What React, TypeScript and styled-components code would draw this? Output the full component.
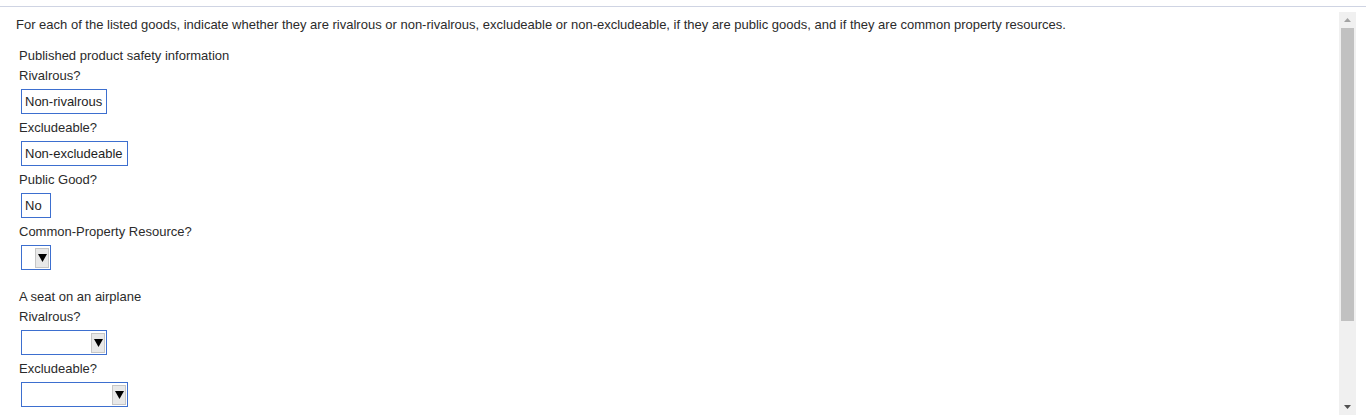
import React from 'react';
import styled, { createGlobalStyle } from 'styled-components';

const GlobalStyle = createGlobalStyle`
  html, body {
    margin: 0;
    padding: 0;
    background: #ffffff;
  }
  body {
    font-family: "Liberation Sans", Arial, sans-serif;
    font-size: 13px;
    color: #2b2b2b;
  }
`;

const Frame = styled.div`
  height: 415px;
  padding-top: 6px;
  box-sizing: border-box;
  display: flex;
  flex-direction: column;
  overflow: hidden;
`;

const Panel = styled.div`
  flex: 1;
  min-height: 0;
  display: flex;
  border-top: 1px solid #cfd4e3;
`;

const Content = styled.div`
  flex: 1;
  padding: 8px 0 0 16px;
  overflow: hidden;
`;

const Line = styled.div`
  line-height: 20px;
  white-space: nowrap;
`;

const Group = styled.div`
  display: flex;
  flex-direction: column;
  align-items: flex-start;
  margin: 11px 0 13px 3px;
  & + & {
    margin-top: 0;
  }
`;

const Field = styled.div<{ $width: number }>`
  display: flex;
  align-items: center;
  width: ${(p) => p.$width}px;
  height: 25px;
  margin: 3px 0 4px 2px;
  padding: 0 0 0 3px;
  box-sizing: border-box;
  border: 1px solid #3d6fcf;
  color: #1e1e1e;
  white-space: nowrap;
`;

const SelectField = styled(Field)`
  justify-content: flex-end;
  align-items: flex-end;
  padding: 0 1px 1px 0;
`;

const ArrowButton = styled.div`
  width: 14px;
  height: 20px;
  box-sizing: border-box;
  display: flex;
  align-items: center;
  justify-content: center;
  background: #e8e8e8;
  border: 1px solid #c6c6c6;
`;

const Scrollbar = styled.div`
  width: 17px;
  margin: 5px 10px 0 0;
  background: #f0f0f0;
  display: flex;
  flex-direction: column;
  align-items: center;
`;

const ScrollArrow = styled.div`
  height: 16px;
  width: 100%;
  display: flex;
  align-items: center;
  justify-content: center;
`;

const Thumb = styled.div`
  width: 13px;
  height: 293px;
  background: #c1c1c1;
`;

const Spacer = styled.div`
  flex: 1;
`;

const Caret = () => (
  <svg width="9" height="8" viewBox="0 0 9 8">
    <polygon points="0,0 9,0 4.5,8" fill="#000" />
  </svg>
);

type Question = { label: string; answer?: string; width: number };
type Good = { title: string; questions: Question[] };

const goods: Good[] = [
  {
    title: 'Published product safety information',
    questions: [
      { label: 'Rivalrous?', answer: 'Non-rivalrous', width: 86 },
      { label: 'Excludeable?', answer: 'Non-excludeable', width: 107 },
      { label: 'Public Good?', answer: 'No', width: 30 },
      { label: 'Common-Property Resource?', width: 30 },
    ],
  },
  {
    title: 'A seat on an airplane',
    questions: [
      { label: 'Rivalrous?', width: 86 },
      { label: 'Excludeable?', width: 107 },
    ],
  },
];

export default function App() {
  return (
    <>
      <GlobalStyle />
      <Frame>
        <Panel>
          <Content>
            <Line>
              For each of the listed goods, indicate whether they are rivalrous or non-rivalrous,
              excludeable or non-excludeable, if they are public goods, and if they are common
              property resources.
            </Line>
            {goods.map((g) => (
              <Group key={g.title}>
                <Line>{g.title}</Line>
                {g.questions.map((q) => (
                  <React.Fragment key={q.label}>
                    <Line>{q.label}</Line>
                    {q.answer ? (
                      <Field $width={q.width}>{q.answer}</Field>
                    ) : (
                      <SelectField $width={q.width}>
                        <ArrowButton>
                          <Caret />
                        </ArrowButton>
                      </SelectField>
                    )}
                  </React.Fragment>
                ))}
              </Group>
            ))}
          </Content>
          <Scrollbar>
            <ScrollArrow>
              <svg width="7" height="4" viewBox="0 0 7 4">
                <polygon points="0,4 7,4 3.5,0" fill="#a3a3a3" />
              </svg>
            </ScrollArrow>
            <Thumb />
            <Spacer />
            <ScrollArrow>
              <svg width="7" height="4" viewBox="0 0 7 4">
                <polygon points="0,0 7,0 3.5,4" fill="#505050" />
              </svg>
            </ScrollArrow>
          </Scrollbar>
        </Panel>
      </Frame>
    </>
  );
}
